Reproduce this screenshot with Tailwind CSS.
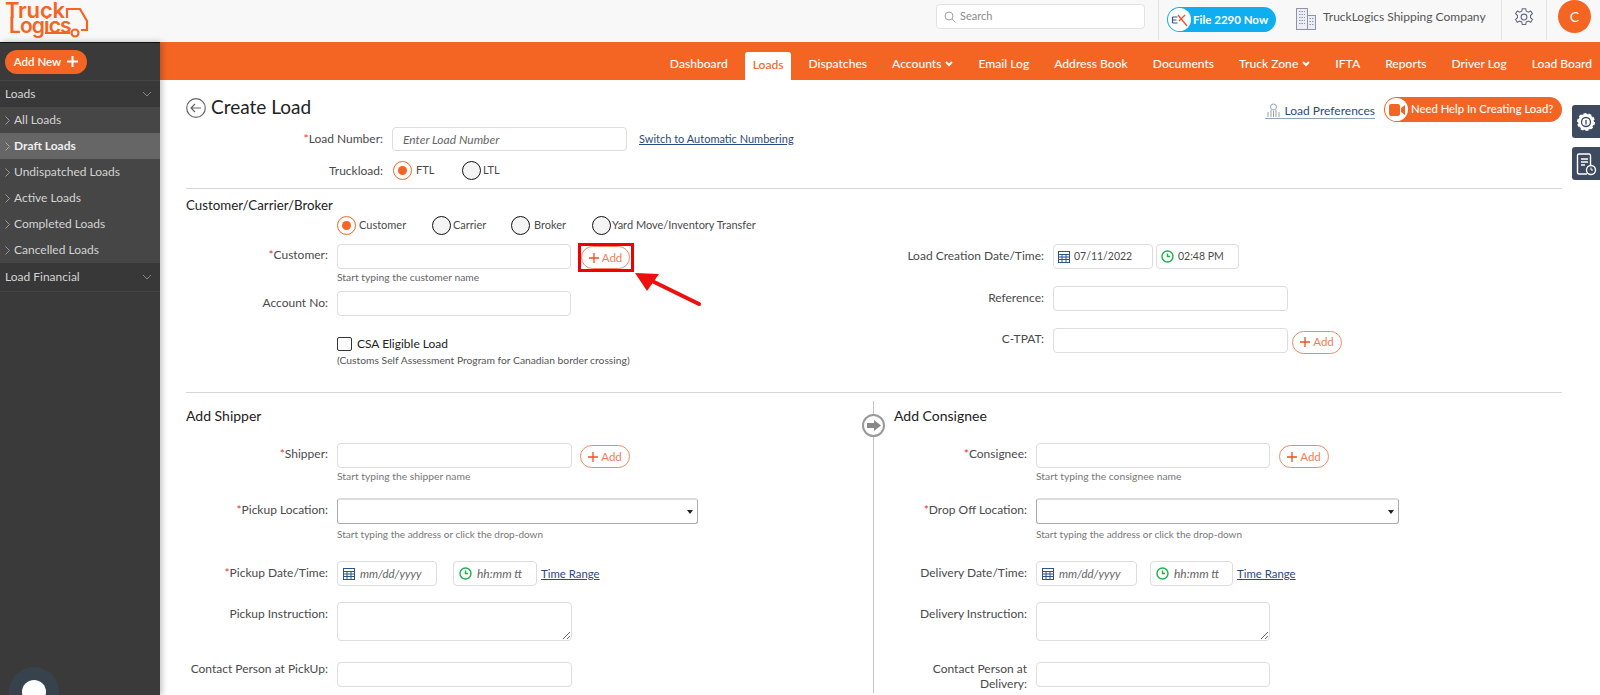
<!doctype html>
<html lang="en">

<head>
    <meta charset="UTF-8" />
    <title>Create Load</title>
    <script src="https://cdn.jsdelivr.net/npm/@tailwindcss/browser@4"></script>
</head>

<body class="h-[695px] overflow-hidden bg-white font-['Lato','Liberation_Sans',sans-serif] text-[12px] text-[#4a4a4a]">

    <!-- Top bar -->
    <header class="flex h-[42px] items-center bg-[#f8f8f8]">
        <!-- Logo -->
        <div class="relative h-[42px] w-[100px] shrink-0 overflow-hidden font-['Inter',sans-serif] font-semibold text-[#f46523]">
            <span class="absolute left-[5px] top-[2px] text-[22px] leading-[16px] tracking-[-0.2px]">Truck</span>
            <span class="absolute left-[9px] top-[18px] text-[21px] leading-[16px] tracking-[-0.9px]">Logics</span>
            <svg class="absolute left-0 top-0" width="100" height="42" fill="none" stroke="#f46523" stroke-width="2.200">
                <path d="M67 18V9h13l7 12v9h-6M70 33H45" />
                <circle cx="75" cy="33" r="3.500" />
            </svg>
        </div>
        <div class="flex-1"></div>
        <!-- Search -->
        <div class="mb-[9px] flex h-[25px] w-[209px] items-center gap-[4px] rounded-[4px] border border-[#e2e2e2] bg-white pl-[7px] text-[11px] text-[#8a8a8a]">
            <svg width="12" height="12" viewBox="0 0 12 12" fill="none" stroke="#a0a0a0"><circle cx="5" cy="5" r="4" /><path d="M8 8l3.500 3.500" /></svg>
            Search
        </div>
        <div class="ml-[13px] h-[40px] w-px self-start bg-[#e4e4e4]"></div>
        <!-- File 2290 -->
        <div class="mb-[3px] ml-[8px] flex h-[25px] w-[109px] items-center gap-[2px] whitespace-nowrap rounded-full bg-[#0eaef0] pl-[1px] text-[11.5px] font-bold text-white">
            <div class="flex h-[23px] w-[23px] items-center justify-center rounded-full bg-white">
                <svg width="17" height="14" viewBox="0 0 17 14" fill="none">
                    <path d="M1.500 4h5M1.500 7h4M1.500 10h5M1.500 4v6" stroke="#35508c" stroke-width="1.200" />
                    <path d="M7 2l9 11M14 2L8 8" stroke="#e8552a" stroke-width="1.300" />
                </svg>
            </div>
            File 2290 Now
        </div>
        <!-- Company -->
        <svg class="mb-[5px] ml-[20px]" width="20" height="22" viewBox="0 0 20 22" fill="#eceef3" stroke="#8d93a8">
            <rect x="0.500" y="0.500" width="11" height="21" />
            <rect x="11.500" y="7.500" width="8" height="14" />
            <path d="M3 3.500h6M3 6.500h6M3 9.500h6M3 12.500h6M3 15.500h6M13.500 10.500h4M13.500 13.500h4M13.500 16.500h4" stroke-dasharray="1.500 1" />
        </svg>
        <span class="mb-[9px] ml-[7px] w-[165px] whitespace-nowrap text-[12px] text-[#555]">TruckLogics Shipping Company</span>
        <div class="ml-[13px] h-[40px] w-px self-start bg-[#e4e4e4]"></div>
        <svg class="mb-[8px] ml-[12px]" width="20" height="22" viewBox="0 0 24 24" fill="none" stroke="#5e6a7d" stroke-width="1.300">
            <circle cx="12" cy="12" r="3.500" />
            <path d="M10 2h4l.7 3 2.600 1.200 2.800-1.500 2 3.400-2.300 2.100v2.600l2.300 2.100-2 3.400-2.800-1.500-2.600 1.200-.7 3h-4l-.7-3-2.600-1.200-2.800 1.500-2-3.400 2.300-2.100v-2.600L1.900 8.100l2-3.400 2.800 1.500 2.600-1.200z" />
        </svg>
        <div class="ml-[12px] h-[40px] w-px self-start bg-[#e4e4e4]"></div>
        <div class="mb-[9px] ml-[11px] mr-[9px] flex h-[33px] w-[33px] items-center justify-center rounded-full bg-[#f46523] text-[14px] text-white">C</div>
    </header>

    <div class="flex h-[653px]">
        <!-- Sidebar -->
        <aside class="relative z-10 h-full w-[160px] shrink-0 overflow-hidden border-t border-[#111] bg-[#3a3a3a] text-[12px] text-[#d4d4d4] shadow-[2px_0_6px_rgba(0,0,0,0.25)]">
            <div class="flex h-[37px] items-center pl-[5px]">
                <div class="flex h-[24px] w-[82px] items-center justify-center gap-[6px] rounded-full bg-[#f46523] text-[11.5px] font-semibold text-white">
                    Add New
                    <svg width="11" height="11" viewBox="0 0 11 11" stroke="#fff" stroke-width="2"><path d="M5.500 0v11M0 5.500h11" /></svg>
                </div>
            </div>
            <div class="flex h-[27px] items-center justify-between border-t border-[#444] bg-[#383838] pl-[5px] pr-[8px]">
                Loads
                <svg width="10" height="6" viewBox="0 0 10 6" fill="none" stroke="#888"><path d="M1 1l4 4 4-4" /></svg>
            </div>
            <div class="bg-[#464646]">
                <div class="flex h-[26px] items-center gap-[4px] pl-[5px]">
                    <svg width="5" height="9" viewBox="0 0 5 9" fill="none" stroke="#9a9a9a"><path d="M.5.500l4 4-4 4" /></svg>
                    All Loads
                </div>
                <div class="flex h-[26px] items-center gap-[4px] bg-[#666] pl-[5px] font-bold text-[#eee]">
                    <svg width="5" height="9" viewBox="0 0 5 9" fill="none" stroke="#aaa"><path d="M.5.500l4 4-4 4" /></svg>
                    Draft Loads
                </div>
                <div class="flex h-[26px] items-center gap-[4px] pl-[5px]">
                    <svg width="5" height="9" viewBox="0 0 5 9" fill="none" stroke="#9a9a9a"><path d="M.5.500l4 4-4 4" /></svg>
                    Undispatched Loads
                </div>
                <div class="flex h-[26px] items-center gap-[4px] pl-[5px]">
                    <svg width="5" height="9" viewBox="0 0 5 9" fill="none" stroke="#9a9a9a"><path d="M.5.500l4 4-4 4" /></svg>
                    Active Loads
                </div>
                <div class="flex h-[26px] items-center gap-[4px] pl-[5px]">
                    <svg width="5" height="9" viewBox="0 0 5 9" fill="none" stroke="#9a9a9a"><path d="M.5.500l4 4-4 4" /></svg>
                    Completed Loads
                </div>
                <div class="flex h-[26px] items-center gap-[4px] pl-[5px]">
                    <svg width="5" height="9" viewBox="0 0 5 9" fill="none" stroke="#9a9a9a"><path d="M.5.500l4 4-4 4" /></svg>
                    Cancelled Loads
                </div>
            </div>
            <div class="flex h-[29px] items-center justify-between border-b border-[#444] bg-[#383838] pl-[5px] pr-[8px]">
                Load Financial
                <svg width="10" height="6" viewBox="0 0 10 6" fill="none" stroke="#888"><path d="M1 1l4 4 4-4" /></svg>
            </div>
            <!-- chat bubble, cut by the window edge -->
            <div class="absolute left-[9px] top-[624px] flex h-[50px] w-[50px] items-center justify-center rounded-full bg-[#37424d]">
                <div class="h-[24px] w-[24px] rounded-full bg-white"></div>
            </div>
        </aside>

        <main class="relative min-w-0 flex-1">
            <!-- Nav -->
            <nav class="flex h-[38px] items-end justify-end gap-[25px] bg-[#f46523] pr-[8px] text-[12.1px] font-medium text-white">
                <span class="h-[29px] leading-[26px]">Dashboard</span>
                <span class="-mx-[8px] h-[28px] rounded-t-[3px] bg-white px-[8px] leading-[26px] text-[#f46523]">Loads</span>
                <span class="h-[29px] leading-[26px]">Dispatches</span>
                <span class="flex h-[29px] items-center gap-[4px] pb-[3px]">Accounts
                    <svg width="8" height="6" viewBox="0 0 8 6" fill="none" stroke="#fff" stroke-width="2"><path d="M1 1l3 3 3-3" /></svg>
                </span>
                <span class="h-[29px] leading-[26px]">Email Log</span>
                <span class="h-[29px] leading-[26px]">Address Book</span>
                <span class="h-[29px] leading-[26px]">Documents</span>
                <span class="flex h-[29px] items-center gap-[4px] pb-[3px]">Truck Zone
                    <svg width="8" height="6" viewBox="0 0 8 6" fill="none" stroke="#fff" stroke-width="2"><path d="M1 1l3 3 3-3" /></svg>
                </span>
                <span class="h-[29px] leading-[26px]">IFTA</span>
                <span class="h-[29px] leading-[26px]">Reports</span>
                <span class="h-[29px] leading-[26px]">Driver Log</span>
                <span class="h-[29px] leading-[26px]">Load Board</span>
            </nav>

            <!-- Side tabs -->
            <div class="absolute right-0 top-[63px] flex h-[33px] w-[28px] items-center justify-center rounded-l-[3px] bg-[#3d4a60]">
                <svg width="20" height="20" viewBox="0 0 20 20">
                    <circle cx="10" cy="10" r="8" fill="#fff" stroke="#fff" stroke-dasharray="3 2" stroke-width="2" />
                    <circle cx="10" cy="10" r="4.500" fill="none" stroke="#3d4a60" stroke-width="1.300" />
                    <path d="M10 8v4.500" stroke="#3d4a60" stroke-width="1.300" />
                </svg>
            </div>
            <div class="absolute right-0 top-[105px] flex h-[33px] w-[28px] items-center justify-center rounded-l-[3px] bg-[#3d4a60]">
                <svg width="22" height="24" viewBox="0 0 22 24" fill="none" stroke="#fff" stroke-width="1.400">
                    <path d="M12 22H4a1.500 1.500 0 0 1-1.500-1.500v-17A1.500 1.500 0 0 1 4 2h10a1.500 1.500 0 0 1 1.500 1.500V13" />
                    <path d="M6 7h7M6 10h7M6 13h4" />
                    <circle cx="16" cy="18" r="4.500" />
                    <path d="M16 15.500V18h2" stroke-width="1" />
                </svg>
            </div>

            <!-- Form -->
            <div class="pl-[26px] pr-[38px]">
                <!-- Title -->
                <div class="mt-[17px] flex h-[25px] items-center">
                    <svg class="mb-[4px]" width="20" height="20" viewBox="0 0 20 20" fill="none" stroke="#666" stroke-width="1.200">
                        <circle cx="10" cy="10" r="9.300" />
                        <path d="M15 10H5M9 6l-4 4 4 4" />
                    </svg>
                    <h1 class="mb-[5px] ml-[5px] text-[19px] text-[#222]">Create Load</h1>
                    <div class="flex-1"></div>
                    <div class="mr-[9px] mt-[3px] flex items-center gap-[3px] border-b border-[#8fa3b5]">
                        <svg width="17" height="15" viewBox="0 0 17 15" fill="none" stroke="#8fa3b5">
                            <circle cx="8.500" cy="4" r="3" />
                            <path d="M3 9v5M6 7v7M8.500 8v6M11 7v7M14 9v5" />
                        </svg>
                        <a class="leading-[15px] text-[#2d4a7c]">Load Preferences</a>
                    </div>
                    <div class="flex h-[25px] w-[178px] items-center gap-[3px] whitespace-nowrap rounded-full bg-[#f46523] pl-[1px] text-[11.3px] font-medium text-white">
                        <div class="flex h-[23px] w-[23px] items-center justify-center rounded-full bg-white">
                            <svg width="16" height="12" viewBox="0 0 16 12" fill="#f46523"><rect width="11" height="12" rx="2" /><path d="M12 4l4-3v10l-4-3z" /></svg>
                        </div>
                        Need Help In Creating Load?
                    </div>
                </div>

                <!-- Load number -->
                <div class="mt-[5px] flex h-[24px] items-center">
                    <label class="w-[197px] text-right"><span class="text-[#e33]">*</span>Load Number:</label>
                    <input class="ml-[9px] h-[24px] w-[235px] rounded-[4px] border border-[#ddd] bg-white pl-[10px] text-[12px] placeholder:italic placeholder:text-[#666]" placeholder="Enter Load Number" />
                    <a class="ml-[12px] text-[11px] text-[#2d4a7c] underline">Switch to Automatic Numbering</a>
                </div>
                <div class="mt-[10px] flex h-[19px] items-center">
                    <label class="w-[197px] text-right">Truckload:</label>
                    <span class="ml-[10px] flex h-[19px] w-[19px] items-center justify-center rounded-full border-[1.5px] border-[#f46523]"><span class="h-[9px] w-[9px] rounded-full bg-[#f46523]"></span></span>
                    <span class="ml-[4px] w-[46px] text-[11px]">FTL</span>
                    <span class="h-[19px] w-[19px] rounded-full border-[1.5px] border-[#111] bg-[#f4f4f4]"></span>
                    <span class="ml-[2px] text-[11px]">LTL</span>
                </div>
                <hr class="mt-[8px] border-[#d5d5d5]" />

                <!-- Customer -->
                <div class="relative h-[203px] pt-[8px]">
                    <h2 class="text-[13.3px] leading-[16px] text-[#222]">Customer/Carrier/Broker</h2>
                    <div class="ml-[151px] mt-[3px] flex h-[19px] items-center text-[11px]">
                        <span class="flex h-[19px] w-[19px] items-center justify-center rounded-full border-[1.5px] border-[#f46523]"><span class="h-[9px] w-[9px] rounded-full bg-[#f46523]"></span></span>
                        <span class="ml-[3px] w-[73px]">Customer</span>
                        <span class="h-[19px] w-[19px] rounded-full border-[1.5px] border-[#111] bg-[#f4f4f4]"></span>
                        <span class="ml-[2px] w-[58px]">Carrier</span>
                        <span class="h-[19px] w-[19px] rounded-full border-[1.5px] border-[#111] bg-[#f4f4f4]"></span>
                        <span class="ml-[4px] w-[58px]">Broker</span>
                        <span class="h-[19px] w-[19px] rounded-full border-[1.5px] border-[#111] bg-[#f4f4f4]"></span>
                        <span class="ml-[1px] whitespace-nowrap">Yard Move/Inventory Transfer</span>
                    </div>
                    <div class="mt-[9px] flex h-[25px] items-center">
                        <label class="mb-[4px] w-[142px] text-right"><span class="text-[#e33]">*</span>Customer:</label>
                        <input class="ml-[9px] h-[25px] w-[234px] rounded-[4px] border border-[#ddd] bg-white" />
                        <div class="relative ml-[10px] mt-[2px] flex h-[23px] w-[49px] items-center justify-center gap-[3px] rounded-full border border-[#f08a62] text-[11.5px] text-[#f47a5c]">
                            <svg width="10" height="10" viewBox="0 0 10 10" stroke="#f04e23" stroke-width="1.300"><path d="M5 0v10M0 5h10" /></svg>Add
                            <!-- red annotation box -->
                            <div class="absolute -bottom-[4px] -left-[4px] -right-[5px] -top-[4px] border-[3px] border-[#f00000]"></div>
                        </div>
                    </div>
                    <p class="ml-[151px] mt-px text-[10.3px] leading-[14px] text-[#666]">Start typing the customer name</p>
                    <div class="mt-[7px] flex h-[25px] items-center">
                        <label class="mb-[2px] w-[142px] text-right">Account No:</label>
                        <input class="ml-[9px] h-[25px] w-[234px] rounded-[4px] border border-[#ddd] bg-white" />
                    </div>
                    <div class="ml-[151px] mt-[21px] flex h-[14px] items-center">
                        <span class="h-[14px] w-[15px] rounded-[2px] border-[1.5px] border-[#333] bg-white"></span>
                        <span class="ml-[5px] text-[#222]">CSA Eligible Load</span>
                    </div>
                    <p class="ml-[151px] mt-[2px] text-[10.3px] leading-[14px] text-[#555]">(Customs Self Assessment Program for Canadian border crossing)</p>

                    <!-- red arrow annotation -->
                    <svg class="absolute left-[440px] top-[75px]" width="80" height="50" fill="none">
                        <path d="M73 40L22 15" stroke="#ee0f0f" stroke-width="4" stroke-linecap="round" />
                        <path d="M9 9l24 1-12 17z" fill="#ee0f0f" />
                    </svg>

                    <!-- right column rows -->
                    <div class="absolute left-[678px] top-[55px] w-[700px]">
                        <div class="flex h-[25px] items-center">
                            <label class="mb-[2px] w-[180px] text-right">Load Creation Date/Time:</label>
                            <div class="ml-[9px] flex h-[25px] w-[100px] items-center gap-[4px] rounded-[4px] border border-[#ddd] pl-[4px] text-[10.5px]">
                                <svg width="12" height="12" viewBox="0 0 12 12" fill="#fff" stroke="#2e5488"><rect x=".5" y=".5" width="11" height="11" /><path d="M.5 3.500h11M.5 6h11M.5 8.500h11M4 3.500v8M8 3.500v8" /></svg>
                                07/11/2022
                            </div>
                            <div class="ml-[3px] flex h-[25px] w-[83px] items-center gap-[4px] rounded-[4px] border border-[#ddd] pl-[4px] text-[10.5px]">
                                <svg width="13" height="13" viewBox="0 0 13 13" fill="none" stroke="#19b34a" stroke-width="1.400"><circle cx="6.500" cy="6.500" r="5.500" /><path d="M6.500 3.500v3h2.500" /></svg>
                                02:48 PM
                            </div>
                        </div>
                        <div class="mt-[17px] flex h-[25px] items-center">
                            <label class="mb-[2px] w-[180px] text-right">Reference:</label>
                            <input class="ml-[9px] h-[25px] w-[235px] rounded-[4px] border border-[#ddd] bg-white" />
                        </div>
                        <div class="mt-[17px] flex h-[25px] items-center">
                            <label class="mb-[4px] w-[180px] text-right">C-TPAT:</label>
                            <input class="ml-[9px] h-[25px] w-[235px] rounded-[4px] border border-[#ddd] bg-white" />
                            <div class="ml-[4px] mt-[3px] flex h-[23px] w-[50px] items-center justify-center gap-[3px] rounded-full border border-[#f08a62] text-[11.5px] text-[#f47a5c]">
                                <svg width="10" height="10" viewBox="0 0 10 10" stroke="#f04e23" stroke-width="1.300"><path d="M5 0v10M0 5h10" /></svg>Add
                            </div>
                        </div>
                    </div>
                </div>
                <hr class="border-[#d5d5d5]" />

                <!-- Shipper / Consignee -->
                <div class="grid grid-cols-[687px_1fr]">
                    <div>
                        <h2 class="mt-[15px] text-[14px] leading-[16px] text-[#222]">Add Shipper</h2>
                        <div class="mt-[19px] flex h-[25px] items-center">
                            <label class="mb-[4px] w-[142px] text-right"><span class="text-[#e33]">*</span>Shipper:</label>
                            <input class="ml-[9px] h-[25px] w-[235px] rounded-[4px] border border-[#ddd] bg-white" />
                            <div class="ml-[8px] mt-[2px] flex h-[23px] w-[50px] items-center justify-center gap-[3px] rounded-full border border-[#f08a62] text-[11.5px] text-[#f47a5c]">
                                <svg width="10" height="10" viewBox="0 0 10 10" stroke="#f04e23" stroke-width="1.300"><path d="M5 0v10M0 5h10" /></svg>Add
                            </div>
                        </div>
                        <p class="ml-[151px] mt-px text-[10.3px] leading-[14px] text-[#777]">Start typing the shipper name</p>
                        <div class="mt-[15px] flex h-[26px] items-center">
                            <label class="mb-[2px] w-[142px] text-right"><span class="text-[#e33]">*</span>Pickup Location:</label>
                            <div class="relative ml-[9px] h-[26px] w-[361px] rounded-[3px] border border-[#aaa] border-t-2 border-t-[#ddd] bg-white">
                                <span class="absolute right-[4px] top-[10px] h-0 w-0 border-x-[3.5px] border-t-[4px] border-x-transparent border-t-[#222]"></span>
                            </div>
                        </div>
                        <p class="ml-[151px] mt-[3px] text-[10px] leading-[14px] text-[#777]">Start typing the address or click the drop-down</p>
                        <div class="mt-[20px] flex h-[25px] items-center">
                            <label class="mb-[2px] w-[142px] text-right"><span class="text-[#e33]">*</span>Pickup Date/Time:</label>
                            <div class="ml-[9px] flex h-[25px] w-[100px] items-center gap-[5px] rounded-[4px] border border-[#ddd] pl-[5px] text-[11.5px] italic text-[#666]">
                                <svg width="12" height="12" viewBox="0 0 12 12" fill="#fff" stroke="#2e5488"><rect x=".5" y=".5" width="11" height="11" /><path d="M.5 3.500h11M.5 6h11M.5 8.500h11M4 3.500v8M8 3.500v8" /></svg>
                                mm/dd/yyyy
                            </div>
                            <div class="ml-[16px] flex h-[25px] w-[84px] items-center gap-[5px] rounded-[4px] border border-[#ddd] pl-[5px] text-[12px] italic text-[#666]">
                                <svg width="13" height="13" viewBox="0 0 13 13" fill="none" stroke="#19b34a" stroke-width="1.400"><circle cx="6.500" cy="6.500" r="5.500" /><path d="M6.500 3.500v3h2.500" /></svg>
                                hh:mm tt
                            </div>
                            <a class="ml-[4px] text-[11.4px] text-[#2d4a7c] underline">Time Range</a>
                        </div>
                        <div class="mt-[16px] flex items-start">
                            <label class="mt-[3px] w-[142px] text-right">Pickup Instruction:</label>
                            <textarea class="ml-[9px] h-[39px] w-[235px] rounded-[4px] border border-[#ddd] bg-white"></textarea>
                        </div>
                        <div class="mt-[21px] flex h-[25px] items-center">
                            <label class="mb-[12px] w-[142px] whitespace-nowrap text-right">Contact Person at PickUp:</label>
                            <input class="ml-[9px] h-[25px] w-[235px] rounded-[4px] border border-[#ddd] bg-white" />
                        </div>
                    </div>

                    <div class="relative h-[300px] pl-[21px]">
                        <!-- divider with arrow -->
                        <div class="absolute bottom-0 left-0 top-[8px] w-px bg-[#c4c4c4]"></div>
                        <div class="absolute left-[-11px] top-[21px] flex h-[23px] w-[23px] items-center justify-center rounded-full border-2 border-[#999] bg-white">
                            <svg width="14" height="11" viewBox="0 0 14 11" fill="#888"><path d="M0 3h7V0l7 5.500L7 11V8H0z" /></svg>
                        </div>
                        <h2 class="mt-[15px] text-[14px] leading-[16px] text-[#222]">Add Consignee</h2>
                        <div class="mt-[19px] flex h-[25px] items-center">
                            <label class="mb-[4px] w-[133px] text-right"><span class="text-[#e33]">*</span>Consignee:</label>
                            <input class="ml-[9px] h-[25px] w-[234px] rounded-[4px] border border-[#ddd] bg-white" />
                            <div class="ml-[9px] mt-[2px] flex h-[23px] w-[50px] items-center justify-center gap-[3px] rounded-full border border-[#f08a62] text-[11.5px] text-[#f47a5c]">
                                <svg width="10" height="10" viewBox="0 0 10 10" stroke="#f04e23" stroke-width="1.300"><path d="M5 0v10M0 5h10" /></svg>Add
                            </div>
                        </div>
                        <p class="ml-[142px] mt-px text-[10.3px] leading-[14px] text-[#777]">Start typing the consignee name</p>
                        <div class="mt-[15px] flex h-[26px] items-center">
                            <label class="mb-[2px] w-[133px] text-right"><span class="text-[#e33]">*</span>Drop Off Location:</label>
                            <div class="relative ml-[9px] h-[26px] w-[363px] rounded-[3px] border border-[#aaa] border-t-2 border-t-[#ddd] bg-white">
                                <span class="absolute right-[4px] top-[10px] h-0 w-0 border-x-[3.5px] border-t-[4px] border-x-transparent border-t-[#222]"></span>
                            </div>
                        </div>
                        <p class="ml-[142px] mt-[3px] text-[10px] leading-[14px] text-[#777]">Start typing the address or click the drop-down</p>
                        <div class="mt-[20px] flex h-[25px] items-center">
                            <label class="mb-[2px] w-[133px] text-right">Delivery Date/Time:</label>
                            <div class="ml-[9px] flex h-[25px] w-[101px] items-center gap-[5px] rounded-[4px] border border-[#ddd] pl-[5px] text-[11.5px] italic text-[#666]">
                                <svg width="12" height="12" viewBox="0 0 12 12" fill="#fff" stroke="#2e5488"><rect x=".5" y=".5" width="11" height="11" /><path d="M.5 3.500h11M.5 6h11M.5 8.500h11M4 3.500v8M8 3.500v8" /></svg>
                                mm/dd/yyyy
                            </div>
                            <div class="ml-[13px] flex h-[25px] w-[83px] items-center gap-[5px] rounded-[4px] border border-[#ddd] pl-[5px] text-[12px] italic text-[#666]">
                                <svg width="13" height="13" viewBox="0 0 13 13" fill="none" stroke="#19b34a" stroke-width="1.400"><circle cx="6.500" cy="6.500" r="5.500" /><path d="M6.500 3.500v3h2.500" /></svg>
                                hh:mm tt
                            </div>
                            <a class="ml-[4px] text-[11.4px] text-[#2d4a7c] underline">Time Range</a>
                        </div>
                        <div class="mt-[16px] flex items-start">
                            <label class="mt-[3px] w-[133px] text-right">Delivery Instruction:</label>
                            <textarea class="ml-[9px] h-[39px] w-[234px] rounded-[4px] border border-[#ddd] bg-white"></textarea>
                        </div>
                        <div class="mt-[21px] flex h-[25px] items-start">
                            <label class="-mt-[1px] w-[133px] text-right leading-[15px]">Contact Person at Delivery:</label>
                            <input class="ml-[9px] h-[25px] w-[234px] rounded-[4px] border border-[#ddd] bg-white" />
                        </div>
                    </div>
                </div>
            </div>
        </main>
    </div>
</body>

</html>
